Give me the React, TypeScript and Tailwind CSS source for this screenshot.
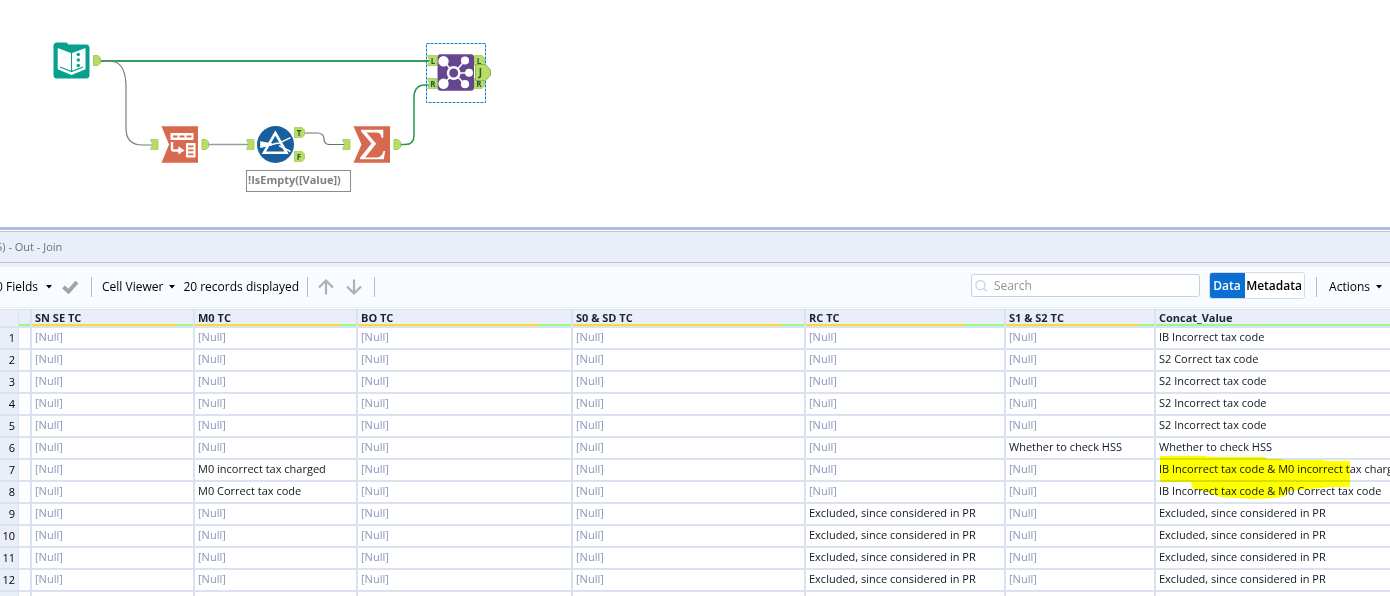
import React from "react";

type Column = { name: string; col: string; filled?: string };

const columns: Column[] = [
  { name: "SN SE TC", col: "w-[163px]", filled: "w-[90%]" },
  { name: "M0 TC", col: "w-[163px]", filled: "w-[90%]" },
  { name: "BO TC", col: "w-[215px]", filled: "w-[85%]" },
  { name: "S0 & SD TC", col: "w-[233px]", filled: "w-[90%]" },
  { name: "RC TC", col: "w-[200px]", filled: "w-[80%]" },
  { name: "S1 & S2 TC", col: "w-[150px]", filled: "w-[90%]" },
  { name: "Concat_Value", col: "w-auto" },
];

const N = null;
const EX = "Excluded, since considered in PR";

const rows: (string | null)[][] = [
  [N, N, N, N, N, N, "IB Incorrect tax code"],
  [N, N, N, N, N, N, "S2 Correct tax code"],
  [N, N, N, N, N, N, "S2 Incorrect tax code"],
  [N, N, N, N, N, N, "S2 Incorrect tax code"],
  [N, N, N, N, N, N, "S2 Incorrect tax code"],
  [N, N, N, N, N, "Whether to check HSS", "Whether to check HSS"],
  [N, "M0 incorrect tax charged", N, N, N, N, "IB Incorrect tax code & M0 incorrect tax charged"],
  [N, "M0 Correct tax code", N, N, N, N, "IB Incorrect tax code & M0 Correct tax code"],
  [N, N, N, N, EX, N, EX],
  [N, N, N, N, EX, N, EX],
  [N, N, N, N, EX, N, EX],
  [N, N, N, N, EX, N, EX],
];

function Caret() {
  return (
    <svg width="6" height="4" viewBox="0 0 6 4" aria-hidden="true">
      <path d="M0 0h6L3 3.6z" fill="#000" />
    </svg>
  );
}

function Anchor({ x, y, label }: { x: number; y: number; label?: string }) {
  return (
    <g transform={`translate(${x} ${y})`}>
      <path d="M.5 .5h7.5l2.500 2.500v5l-2.500 2.500H.5z" fill="#b9dd62" stroke="#a3c95e" strokeWidth=".8" />
      {label && (
        <text x="5" y="8.500" textAnchor="middle" className="text-[8px] font-bold" fill="#1f5c3a">
          {label}
        </text>
      )}
    </g>
  );
}

function InAnchor({ x, y, label }: { x: number; y: number; label?: string }) {
  return (
    <g transform={`translate(${x} ${y})`}>
      <path d={label ? "M0 .5h9.500v10H0l2-5z" : "M.5 .5h7.5v10H.5l2-5z"} fill="#b9dd62" stroke="#a3c95e" strokeWidth=".8" />
      {label && (
        <text x="5.500" y="8.500" textAnchor="middle" className="text-[8px] font-bold" fill="#1f5c3a">
          {label}
        </text>
      )}
    </g>
  );
}

function Workflow() {
  return (
    <svg width="520" height="227" viewBox="0 0 520 227" role="img" aria-label="Workflow">
      <g fill="none">
        <path d="M100 61H430" stroke="#2fa055" strokeWidth="1.800" />
        <path d="M100 61.500h12q14 1 14 26V128q0 17 16 17h11" stroke="#7d7d7d" strokeWidth="1.200" />
        <path d="M208 144.500h42" stroke="#9b9b9b" strokeWidth="1.400" />
        <path d="M304 133h13q7 0 7 6t7 5.500h14" stroke="#6f6f6f" strokeWidth="1.200" />
        <path d="M400 144.500h5q9 0 9-9V98q0-13 11-13h5" stroke="#23984a" strokeWidth="1.500" />
      </g>

      {/* Input tool */}
      <path d="M57 42.500h9.500l2 2H86a3.500 3.500 0 0 1 3.500 3.500v27A3.500 3.500 0 0 1 86 78.500H57a3.500 3.500 0 0 1-3.500-3.500V46a3.500 3.500 0 0 1 3.500-3.500z" fill="#07a08f" />
      <path d="M57.700 48 71.500 53.200 85.500 48V69.300L71.500 75 57.700 69.300z" fill="#fff" />
      <path d="M71.500 53v18.500M60 67l11.500 4.600L83 67" fill="none" stroke="#07a08f" strokeWidth="1.100" />
      <g fill="#07a08f">
        <circle cx="78.300" cy="54.500" r="1.700" />
        <circle cx="78.300" cy="60" r="1.700" />
        <circle cx="78.300" cy="65.500" r="1.700" />
      </g>
      <g transform="translate(93 55)">
        <path d="M.5 .5h4.500l2.500 2.500v5L5 10.500H.5z" fill="#b9dd62" stroke="#a3c95e" />
      </g>

      {/* Transpose tool */}
      <InAnchor x={150} y={139} />
      <path d="M161.500 126.300H198v36.400h-36.500l7.500-18.200z" fill="#d6694e" />
      <rect x="170.500" y="133" width="23" height="7" rx=".8" fill="#fff" />
      <path d="M173 136.500h4.500m2 0h5m2 0h5" stroke="#d6694e" strokeWidth="2" />
      <path d="M172 142v7q0 1.500 1.500 1.500H179" fill="none" stroke="#fff" strokeWidth="2.400" />
      <path d="m178.300 146.200 6.200 4.300-6.200 4z" fill="#fff" />
      <rect x="186" y="143" width="9.500" height="14.500" rx=".8" fill="#fff" />
      <path d="M188 146.300h5.500m-5.500 4h5.500m-5.500 4h5.500" stroke="#d6694e" strokeWidth="1.800" />
      <g transform="translate(201.500 139)">
        <path d="M.5 .5h4l2.500 2.500v5L4.500 10.500h-4z" fill="#b9dd62" stroke="#a3c95e" />
      </g>

      {/* Filter tool */}
      <InAnchor x={246} y={139} />
      <circle cx="275.500" cy="144.500" r="18.500" fill="#185f9e" />
      <path d="M260.200 141.200 272 143.300l-.5 2.200-11.300 2.500z" fill="#fff" />
      <path d="M278 143.700 290.500 137.700M279 145.700 290.500 151.500" stroke="#fff" strokeWidth="1.400" />
      <path d="M275.300 133 286.500 152.700h-22.500z" fill="none" stroke="#fff" strokeWidth="2.600" />
      <path d="M270 145l8-2" stroke="#fff" strokeWidth="1.800" />
      <Anchor x={294} y={127} label="T" />
      <Anchor x={294} y={151} label="F" />

      {/* Summarize tool */}
      <InAnchor x={342} y={139} />
      <path d="M353.500 126.300H390v36.400h-36.500l8-18.200z" fill="#d6694e" />
      <path d="M361 129.700h22.300v8h-1.700q-.8-5.300-5.300-5.300h-9.800l9.700 11.300-11 13.700h11.300q5.500 0 7-6.500h1.600l-1.300 8.400H360v-1.500l11.500-14.400L361 131.200z" fill="#fff" />
      <g transform="translate(393.500 139)">
        <path d="M.5 .5h4l2.500 2.500v5L4.500 10.500h-4z" fill="#b9dd62" stroke="#a3c95e" />
      </g>

      {/* Join tool, selected */}
      <rect x="426.500" y="43.500" width="59" height="59" fill="none" stroke="#1580d0" strokeDasharray="3 1" />
      <InAnchor x={427.5} y={55} label="L" />
      <InAnchor x={427.5} y={78} label="R" />
      <rect x="437.500" y="54.300" width="36.500" height="36.500" rx="3" fill="#65478f" />
      <path d="M443.500 61 454 73m0 0-10.500 11M454 73l11-12.500M454 73h15M454 73l11 11.500" stroke="#fff" strokeWidth="1.600" />
      <g fill="#fff">
        <circle cx="443.500" cy="61.200" r="5.200" />
        <circle cx="443.500" cy="83.800" r="5.200" />
        <circle cx="465" cy="60.500" r="4.100" />
        <circle cx="469" cy="72.700" r="4" />
        <circle cx="465" cy="84.200" r="4.100" />
      </g>
      <circle cx="453.700" cy="73" r="5.700" fill="#65478f" stroke="#fff" strokeWidth="2.400" />
      <Anchor x={474} y={55} label="L" />
      <Anchor x={474} y={78} label="R" />
      <path d="M475.500 64.500h10l5 5.500v5l-5 5.500h-10z" fill="#b9dd62" stroke="#8fb552" />
      <text x="480.500" y="76" textAnchor="middle" className="text-[10px] font-bold" fill="#1f5c3a">
        J
      </text>
    </svg>
  );
}

function Divider() {
  return <span className="h-5 w-px bg-[#b9bbbe]" />;
}

function Arrow({ down = false }: { down?: boolean }) {
  return (
    <svg width="16" height="16" viewBox="0 0 16 16" className={down ? "rotate-180" : ""} aria-hidden="true">
      <path d="M8 15.500V2M1 8.500 8 1.500l7 7" fill="none" stroke="#b0b0b0" strokeWidth="2.200" />
    </svg>
  );
}

export default function App() {
  return (
    <div className="flex h-screen flex-col overflow-hidden bg-white font-['Open_Sans','Noto_Sans',sans-serif] text-black">
      <main className="relative h-[227px] shrink-0 overflow-hidden">
        <Workflow />
        <div className="absolute top-[170px] left-[246px] flex h-[22px] w-[105px] items-center border border-[#8c8c8c] bg-white px-px pb-0.5 text-[11px] font-bold text-[#808080]">
          !IsEmpty([Value])
        </div>
      </main>

      <section className="flex min-h-0 flex-1 flex-col overflow-hidden">
        <div className="h-[3px] shrink-0 bg-[#abbedd]" />
        <header className="mt-px flex h-8 shrink-0 items-center border-y border-[#c3c5c9] bg-[#eaeef9]">
          <h2 className="-ml-1 text-[11px] text-[#6f7278]">5) - Out - Join</h2>
        </header>
        <div className="flex h-[45px] shrink-0 items-center border-t-4 border-b border-t-[#eceef9] border-b-[#e9ecf2] bg-[#f8fbff] text-[12px]">
          <button className="-ml-1 flex items-center gap-2">
            0 Fields <Caret />
          </button>
          <button className="ml-2.5" aria-label="Apply">
            <svg width="17" height="14" viewBox="0 0 17 14" aria-hidden="true">
              <path d="m1.500 7 5 4.500 8.500-9.500" fill="none" stroke="#a3a3a3" strokeWidth="4" />
            </svg>
          </button>
          <span className="ml-3 flex">
            <Divider />
          </span>
          <button className="ml-2.5 flex items-center gap-1.5">
            Cell Viewer <Caret />
          </button>
          <span className="ml-2">20 records displayed</span>
          <span className="ml-2 flex items-center gap-2.5">
            <Divider />
            <span className="flex items-center gap-3">
              <button aria-label="Previous">
                <Arrow />
              </button>
              <button aria-label="Next">
                <Arrow down />
              </button>
              <Divider />
            </span>
          </span>
          <div className="ml-auto flex items-center pb-[3px]">
            <label className="flex h-[23px] w-[229px] items-center gap-1.5 rounded-[3px] border border-[#c3d0e6] bg-white pl-[3px]">
              <svg width="14" height="14" viewBox="0 0 14 14" aria-hidden="true">
                <circle cx="6" cy="6" r="5" fill="none" stroke="#c9d5ea" strokeWidth="1.500" />
                <path d="m9.500 9.500 3.500 3.500" stroke="#c9d5ea" strokeWidth="1.500" />
              </svg>
              <input
                type="text"
                aria-label="Search"
                placeholder="Search"
                className="w-full min-w-0 bg-transparent text-[12px] outline-none placeholder:text-[#8f9296]"
              />
            </label>
            <div className="ml-[9px] flex h-[27px] overflow-hidden rounded-[3px] border border-[#d3dcee] bg-white text-[12px] font-semibold">
              <button className="-m-px w-9 bg-[#0b6fd2] text-white">Data</button>
              <button className="w-[60px]">Metadata</button>
            </div>
          </div>
          <span className="ml-[11px] flex">
            <Divider />
          </span>
          <button className="mr-2 ml-3 flex items-center gap-1.5">
            Actions <Caret />
          </button>
        </div>

        <div className="mt-px min-h-0 flex-1 overflow-hidden">
          <table className="w-full table-fixed border-separate border-spacing-0 text-left text-[11px]">
            <colgroup>
              <col className="w-[19px]" />
              <col className="w-[13px]" />
              {columns.map((c) => (
                <col key={c.name} className={c.col} />
              ))}
            </colgroup>
            <thead>
              <tr className="h-[19px] bg-[#eaeef9]">
                <th className="border-t border-r border-b-2 border-[#dae1f0] p-0" />
                <th className="border-t border-r-2 border-b-2 border-[#dae1f0] p-0 align-bottom">
                  <div className="h-0.5 bg-[#98fb84]" />
                </th>
                {columns.map((c) => (
                  <th key={c.name} className="border-t border-r-2 border-b-2 border-[#dae1f0] p-0 font-bold text-[#1c2430] last:border-r-0">
                    <div className="h-3.5 pl-[3px] leading-[16px]">{c.name}</div>
                    <div className="h-0.5 bg-[#98fb84]">
                      {c.filled && <div className={`h-0.5 bg-[#ffd92f] ${c.filled}`} />}
                    </div>
                  </th>
                ))}
              </tr>
            </thead>
            <tbody>
              {rows.map((row, i) => (
                <tr key={i} className="h-[22px]">
                  <th className="border-r border-b-2 border-[#dae1f0] bg-[#eaeef9] p-0 pr-[3px] text-right font-normal leading-5">
                    {i + 1}
                  </th>
                  <td className="border-r-2 border-b-2 border-[#dae1f0] p-0" />
                  {row.map((value, j) => (
                    <td key={j} className="border-r-2 border-b-2 border-[#dae1f0] p-0 pb-0.5 leading-[18px] whitespace-nowrap last:border-r-0">
                      <div className="relative pl-[3px]">
                        {i === 6 && j === 6 && (
                          <svg width="194" height="44" viewBox="0 0 194 44" className="absolute -top-1 left-0 mix-blend-multiply" aria-hidden="true">
                            <path d="M4 0h47v1h59v2h17v1h40v1h27v26h-20l-30 3-15 2 1 4-11 2-23 1-32-2-14-5-13-3-2-7H4z" fill="#ff0" />
                          </svg>
                        )}
                        <span className={value === null ? "text-[#8b96ba]" : "text-[#10161f]"}>{value ?? "[Null]"}</span>
                      </div>
                    </td>
                  ))}
                </tr>
              ))}
              <tr className="h-[22px]">
                <td className="border-r border-b-2 border-[#dae1f0] bg-[#eaeef9] p-0" />
                <td className="border-r-2 border-b-2 border-[#dae1f0] p-0" />
                {columns.map((c) => (
                  <td key={c.name} className="border-r-2 border-b-2 border-[#dae1f0] p-0 last:border-r-0" />
                ))}
              </tr>
            </tbody>
          </table>
        </div>
      </section>
    </div>
  );
}
